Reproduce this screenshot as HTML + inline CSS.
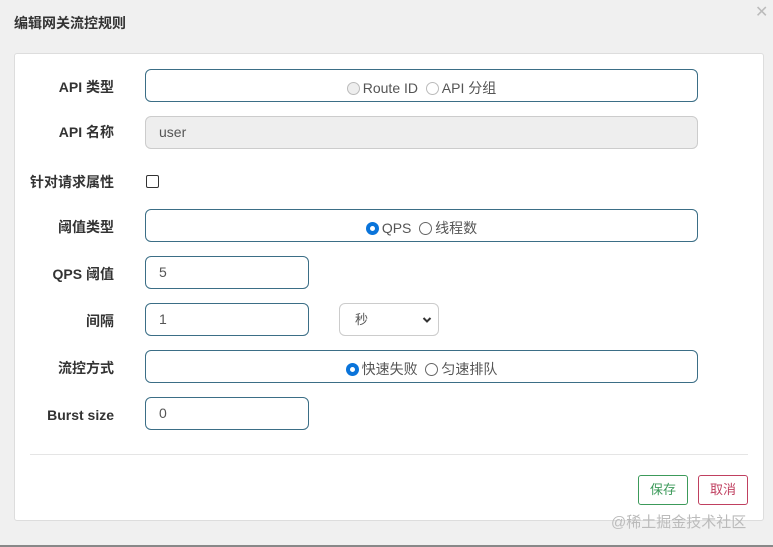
<!DOCTYPE html>
<html><head><meta charset="utf-8"><style>
body{margin:0;width:773px;height:547px;background:#f0f0f0;font-family:"Liberation Sans","Noto Sans CJK SC",sans-serif;position:relative;overflow:hidden;color:#333}
.a{position:absolute}
.title{left:14px;top:13px;font-size:14px;font-weight:bold;color:#333}
.x{left:755px;top:2px;font-size:16px;color:#bbb}
.panel{left:14px;top:53px;width:748px;height:466px;background:#fff;border:1px solid #ddd;border-radius:3px}
.lbl{width:100px;left:14px;text-align:right;font-size:14px;font-weight:bold;color:#333;height:20px;line-height:20px}
.box{border:1px solid #3b6e86;border-radius:6px;box-sizing:border-box;background:#fff;font-size:14px;color:#555}
.wide{left:145px;width:553px;height:33px;text-align:center;line-height:36px}
.sm{left:145px;width:164px;height:33px;line-height:31px;padding-left:13px}
.rad{display:inline-block;width:13px;height:13px;border:1px solid #666;border-radius:50%;vertical-align:-2px;margin-right:3px;box-sizing:border-box}
.on{border:4px solid #0a74da;background:#fff}
.dis{border-color:#bbb;background:#eee}
.btn{top:475px;width:50px;height:30px;box-sizing:border-box;border-radius:3px;font-size:13px;text-align:center;line-height:28px;background:#fff}
</style></head><body>
<div class="a title">编辑网关流控规则</div>
<div class="a x">✕</div>
<div class="a panel"></div>
<div class="a lbl" style="top:77px">API 类型</div>
<div class="a box wide" style="top:69px"><span class="rad dis"></span><span style="color:#555">Route ID</span>&nbsp;&nbsp;<span class="rad dis" style="background:#fff"></span>API 分组</div>
<div class="a lbl" style="top:122px">API 名称</div>
<div class="a box" style="left:145px;top:116px;width:553px;height:33px;line-height:31px;padding-left:13px;background:#eee;border-color:#ccc">user</div>
<div class="a lbl" style="top:172px">针对请求属性</div>
<div class="a" style="left:146px;top:175px;width:13px;height:13px;border:1px solid #333;border-radius:2px;box-sizing:border-box"></div>
<div class="a lbl" style="top:217px">阈值类型</div>
<div class="a box wide" style="top:209px"><span class="rad on"></span>QPS&nbsp;&nbsp;<span class="rad"></span>线程数</div>
<div class="a lbl" style="top:264px">QPS 阈值</div>
<div class="a box sm" style="top:256px">5</div>
<div class="a lbl" style="top:311px">间隔</div>
<div class="a box sm" style="top:303px">1</div>
<div class="a box" style="left:339px;top:303px;width:100px;height:33px;line-height:31px;padding-left:15px;border-color:#ccc;font-size:13px">秒<svg style="position:absolute;right:6px;top:12px" width="10" height="8" viewBox="0 0 10 8"><path d="M1.5 2 L5 5.5 L8.5 2" stroke="#333" stroke-width="2" fill="none"/></svg></div>
<div class="a lbl" style="top:358px">流控方式</div>
<div class="a box wide" style="top:350px"><span class="rad on"></span>快速失败&nbsp;&nbsp;<span class="rad"></span>匀速排队</div>
<div class="a lbl" style="top:405px">Burst size</div>
<div class="a box sm" style="top:397px">0</div>
<div class="a" style="left:30px;top:454px;width:718px;height:1px;background:#e5e5e5"></div>
<div class="a btn" style="left:638px;border:1px solid #3c9a5a;color:#3c9a5a">保存</div>
<div class="a btn" style="left:698px;border:1px solid #c04060;color:#c04060">取消</div>
<div class="a" style="left:611px;top:511px;font-size:15px;color:#bbb">@稀土掘金技术社区</div>
<div class="a" style="left:0;top:545px;width:773px;height:2px;background:#888"></div>
</body></html>
